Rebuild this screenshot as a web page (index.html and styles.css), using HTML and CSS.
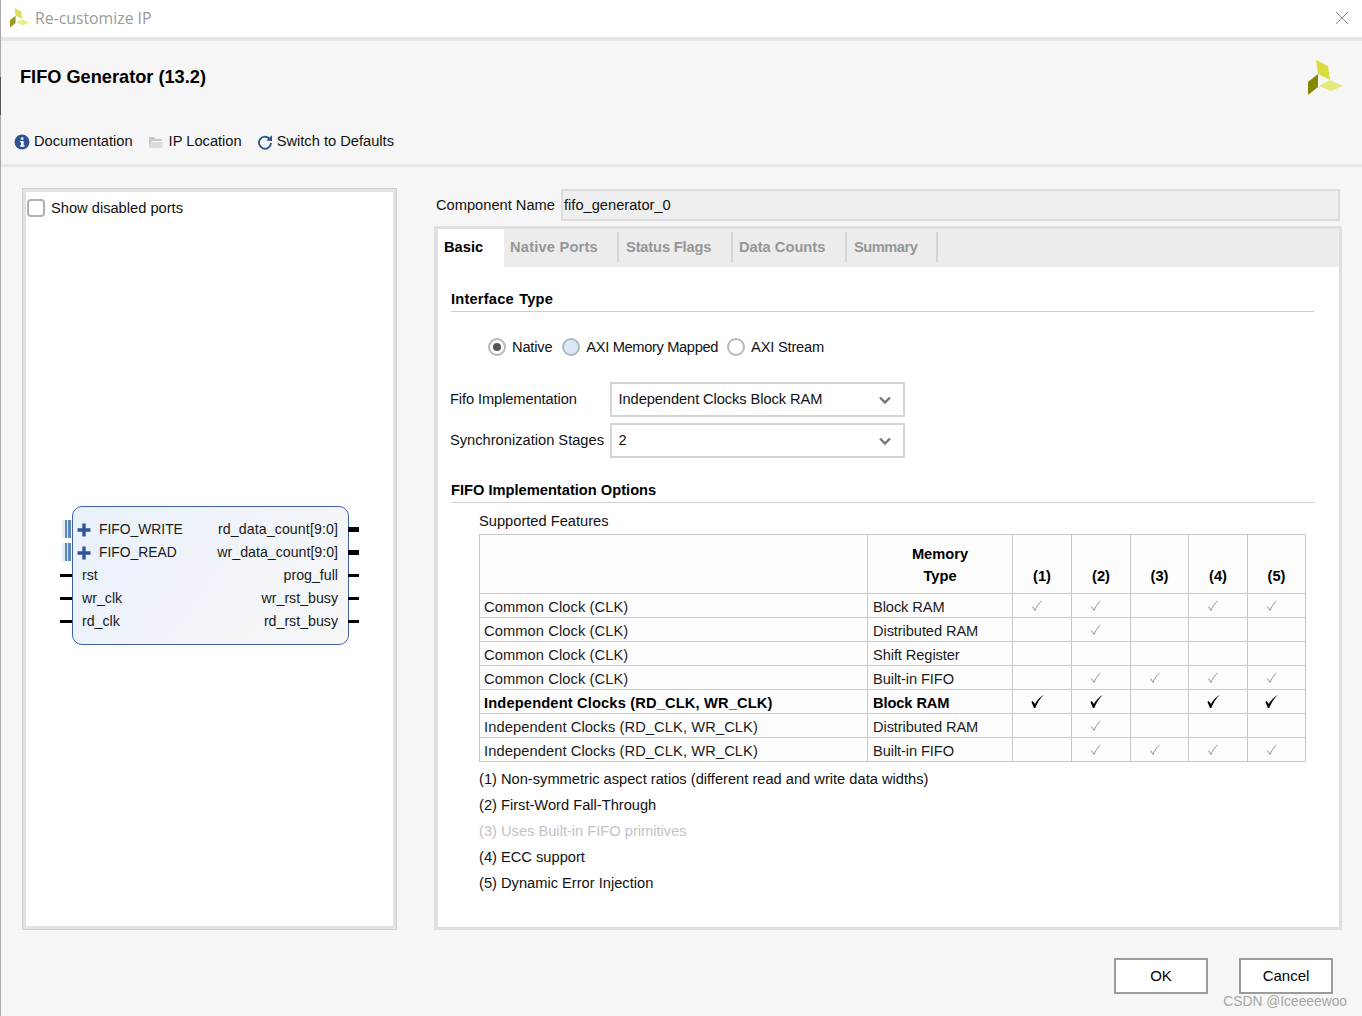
FILE: index.html
```html
<!DOCTYPE html>
<html lang="en">
<head>
<meta charset="utf-8">
<title>Re-customize IP</title>
<link rel="stylesheet" href="styles.css">
</head>
<body>
<svg class="defs" width="0" height="0" aria-hidden="true">
  <defs>
    <symbol id="logo" viewBox="0 0 36 36">
      <polygon points="8,0 20,6 22,20 10,14" fill="#d9dd3d"/>
      <polygon points="10,14 10,27 0,35 0,22" fill="#878700"/>
      <polygon points="11,26 22,20 35,26 23,31" fill="#e4e97c"/>
    </symbol>
    <symbol id="chk" viewBox="0 0 12 14">
      <path d="M1.5 7.5 L4 11.5 C5.2 8 7.5 4.5 10.5 2" fill="none" stroke="currentColor" stroke-width="1"/>
    </symbol>
    <symbol id="chk-b" viewBox="0 0 16 16">
      <path d="M1.5 8.5 L3 7.5 L5.2 10.6 C7.5 6.6 10.5 3.4 14.5 1 C10.8 4.8 8 9 5.6 15 L4.2 15 Z" fill="currentColor"/>
    </symbol>
    <symbol id="chev" viewBox="0 0 14 10">
      <path d="M2 2.5 L7 7.5 L12 2.5" fill="none" stroke="#777" stroke-width="2.4"/>
    </symbol>
  </defs>
</svg>
<div class="window">
  <header class="titlebar">
    <div class="title-left">
      <svg class="logo-small"><use href="#logo"/></svg>
      <span class="title-text">Re-customize IP</span>
    </div>
    <svg class="close" viewBox="0 0 14 14"><path d="M1 1 L13 13 M13 1 L1 13" stroke="#8c8c8c" stroke-width="1" fill="none"/></svg>
  </header>

  <section class="head">
    <div class="head-top">
      <h1 class="app-title">FIFO Generator (13.2)</h1>
      <svg class="logo-big"><use href="#logo"/></svg>
    </div>
    <nav class="toolbar">
      <a class="tool">
        <svg class="tool-icon" viewBox="0 0 16 16"><circle cx="8" cy="8" r="7.5" fill="#2d5390"/><rect x="7" y="7" width="2.6" height="5.4" fill="#fff"/><rect x="6" y="7" width="3" height="1.2" fill="#fff"/><rect x="6" y="11.4" width="4.6" height="1.2" fill="#fff"/><circle cx="8.2" cy="4.6" r="1.4" fill="#fff"/></svg>
        Documentation
      </a>
      <a class="tool tool-wide">
        <svg class="tool-icon" viewBox="0 0 16 16"><path d="M1 3 H6 L7.5 5 H14 V7 H4 L1 13 Z" fill="#c9c9c9"/><path d="M4 8 H15.5 L14 14 H1 Z" fill="#dcdcdc"/></svg>
        IP Location
      </a>
      <a class="tool">
        <svg class="tool-icon" viewBox="0 0 16 16"><path d="M12.9 5.2 A6 6 0 1 0 14 9" fill="none" stroke="#2d5390" stroke-width="1.9"/><polygon points="15,1.2 15,7 9.4,6.4" fill="#2d5390"/></svg>
        Switch to Defaults
      </a>
    </nav>
  </section>

  <main class="main">
    <aside class="left-panel">
      <label class="check-row"><span class="checkbox"></span>Show disabled ports</label>
      <div class="ip-block">
        <div class="port"><span class="pin-bus-l"><svg class="plus" viewBox="0 0 14 14"><path d="M7 0.5 V13.5 M0.5 7 H13.5" stroke="#2f5597" stroke-width="3.4"/></svg></span><span class="pname-bus">FIFO_WRITE</span><span class="rd-count">rd_data_count[9:0]</span><span class="pin-r thick"></span></div>
        <div class="port"><span class="pin-bus-l"><svg class="plus" viewBox="0 0 14 14"><path d="M7 0.5 V13.5 M0.5 7 H13.5" stroke="#2f5597" stroke-width="3.4"/></svg></span><span class="pname-bus">FIFO_READ</span><span>wr_data_count[9:0]</span><span class="pin-r thick"></span></div>
        <div class="port"><span class="pin-l"></span><span>rst</span><span>prog_full</span><span class="pin-r"></span></div>
        <div class="port"><span class="pin-l"></span><span>wr_clk</span><span>wr_rst_busy</span><span class="pin-r"></span></div>
        <div class="port"><span class="pin-l"></span><span>rd_clk</span><span>rd_rst_busy</span><span class="pin-r"></span></div>
      </div>
    </aside>

    <div class="right">
      <div class="comp-row">
        <label class="comp-label">Component Name</label>
        <div class="comp-input">fifo_generator_0</div>
      </div>

      <div class="tab-panel">
        <div class="tabs">
          <div class="tab active t1">Basic</div>
          <div class="tab t2">Native Ports</div>
          <div class="tab t3">Status Flags</div>
          <div class="tab t4">Data Counts</div>
          <div class="tab t5">Summary</div>
        </div>
        <div class="tab-body">
          <h2 class="section">Interface Type</h2>
          <div class="radios">
            <span class="radio checked"></span><span class="r-label r1">Native</span>
            <span class="radio hover"></span><span class="r-label r2">AXI Memory Mapped</span>
            <span class="radio"></span><span class="r-label r3">AXI Stream</span>
          </div>
          <div class="field first">
            <span class="f-label">Fifo Implementation</span>
            <div class="select">Independent Clocks Block RAM<svg class="chev"><use href="#chev"/></svg></div>
          </div>
          <div class="field">
            <span class="f-label">Synchronization Stages</span>
            <div class="select">2<svg class="chev"><use href="#chev"/></svg></div>
          </div>
          <h2 class="section second">FIFO Implementation Options</h2>
          <div class="supported">Supported Features</div>
          <table class="features">
            <colgroup>
              <col class="c-clock"><col class="c-mem"><col class="c-n"><col class="c-n"><col class="c-n3"><col class="c-n"><col class="c-n3">
            </colgroup>
            <thead>
              <tr>
                <th></th>
                <th class="th-mem"><span class="mem-line">Memory</span><span class="mem-line">Type</span></th>
                <th>(1)</th><th>(2)</th><th>(3)</th><th>(4)</th><th>(5)</th>
              </tr>
            </thead>
            <tbody>
              <tr><td>Common Clock (CLK)</td><td>Block RAM</td><td class="c"><svg class="ck"><use href="#chk"/></svg></td><td class="c"><svg class="ck"><use href="#chk"/></svg></td><td></td><td class="c"><svg class="ck"><use href="#chk"/></svg></td><td class="c"><svg class="ck"><use href="#chk"/></svg></td></tr>
              <tr><td>Common Clock (CLK)</td><td>Distributed RAM</td><td></td><td class="c"><svg class="ck"><use href="#chk"/></svg></td><td></td><td></td><td></td></tr>
              <tr><td>Common Clock (CLK)</td><td>Shift Register</td><td></td><td></td><td></td><td></td><td></td></tr>
              <tr><td>Common Clock (CLK)</td><td>Built-in FIFO</td><td></td><td class="c"><svg class="ck"><use href="#chk"/></svg></td><td class="c"><svg class="ck"><use href="#chk"/></svg></td><td class="c"><svg class="ck"><use href="#chk"/></svg></td><td class="c"><svg class="ck"><use href="#chk"/></svg></td></tr>
              <tr class="sel"><td>Independent Clocks (RD_CLK, WR_CLK)</td><td>Block RAM</td><td class="c"><svg class="ckb"><use href="#chk-b"/></svg></td><td class="c"><svg class="ckb"><use href="#chk-b"/></svg></td><td></td><td class="c"><svg class="ckb"><use href="#chk-b"/></svg></td><td class="c"><svg class="ckb"><use href="#chk-b"/></svg></td></tr>
              <tr><td>Independent Clocks (RD_CLK, WR_CLK)</td><td>Distributed RAM</td><td></td><td class="c"><svg class="ck"><use href="#chk"/></svg></td><td></td><td></td><td></td></tr>
              <tr><td>Independent Clocks (RD_CLK, WR_CLK)</td><td>Built-in FIFO</td><td></td><td class="c"><svg class="ck"><use href="#chk"/></svg></td><td class="c"><svg class="ck"><use href="#chk"/></svg></td><td class="c"><svg class="ck"><use href="#chk"/></svg></td><td class="c"><svg class="ck"><use href="#chk"/></svg></td></tr>
            </tbody>
          </table>
          <ul class="notes">
            <li>(1) Non-symmetric aspect ratios (different read and write data widths)</li>
            <li>(2) First-Word Fall-Through</li>
            <li class="muted">(3) Uses Built-in FIFO primitives</li>
            <li>(4) ECC support</li>
            <li>(5) Dynamic Error Injection</li>
          </ul>
        </div>
      </div>
    </div>
  </main>

  <footer class="footer">
    <button class="btn">OK</button>
    <button class="btn">Cancel</button>
  </footer>
  <div class="watermark">CSDN @Iceeeewoo</div>
</div>
</body>
</html>
```
FILE: styles.css
```css
* { box-sizing: border-box; }
html, body { margin: 0; padding: 0; }
body {
  width: 1362px;
  height: 1016px;
  overflow: hidden;
  background: #f6f6f6;
  color: #111;
  font-family: "Liberation Sans", Arial, sans-serif;
  font-size: 14.67px;
}
.defs { position: absolute; }
.window {
  position: relative;
  width: 1362px;
  height: 1016px;
  border-left: 1px solid #a8a8a8;
}
.window::before {
  content: "";
  position: absolute;
  left: -1px;
  top: 77px;
  width: 1px;
  height: 38px;
  background: #555;
}

/* title bar */
.titlebar {
  height: 41px;
  background: #fff;
  border-bottom: 4px solid #e6e6e6;
  display: flex;
  align-items: center;
  justify-content: space-between;
  padding: 0 13px 0 9px;
}
.title-left { display: flex; align-items: center; gap: 5px; }
.logo-small { width: 20px; height: 20px; margin-bottom: 2px; opacity: 0.85; }
.title-text {
  font-family: "Open Sans", sans-serif;
  font-size: 15.8px;
  color: #9a9a9a;
  margin-bottom: 1px;
}
.close { width: 14px; height: 14px; margin-bottom: 1px; }

/* header */
.head {
  height: 126px;
  border-bottom: 3px solid #e6e6e6;
  display: flex;
  flex-direction: column;
}
.head-top {
  height: 78px;
  display: flex;
  justify-content: space-between;
  padding: 24px 18px 0 19px;
}
.app-title {
  margin: 0;
  font-size: 18.2px;
  line-height: 24px;
  font-weight: bold;
  color: #000;
}
.logo-big { width: 36px; height: 36px; margin-top: -5px; }
.toolbar {
  display: flex;
  align-items: center;
  padding-left: 13px;
  gap: 15px;
  height: 44px;
}
.tool { display: flex; align-items: center; gap: 4px; color: #111; }
.tool-wide { gap: 5px; }
.tool-icon { width: 16px; height: 16px; margin-top: 1px; }

/* main area */
.main {
  display: flex;
  gap: 37px;
  padding: 21px 0 0 21px;
}
.left-panel {
  position: relative;
  width: 375px;
  height: 742px;
  background: #fff;
  border: 1px solid #cfcfcf;
  box-shadow: inset 0 0 0 3px #e2e2e2;
  padding: 10px 4px;
}
.check-row { display: flex; align-items: center; gap: 6px; line-height: 18px; }
.checkbox {
  width: 18px;
  height: 18px;
  border: 2px solid #b0b0b0;
  border-radius: 4px;
  background: #fff;
}

/* ip block diagram */
.ip-block {
  position: absolute;
  left: 49px;
  top: 317px;
  width: 277px;
  height: 139px;
  border: 1px solid #3f62a3;
  border-radius: 10px;
  background: linear-gradient(125deg, #eaf1fb 0%, #f1f4f9 55%, #f6f6f6 100%);
  padding: 11px 10px 0 9px;
}
.port {
  position: relative;
  height: 23px;
  line-height: 23px;
  display: flex;
  justify-content: space-between;
  font-size: 14.2px;
  color: #1a1a1a;
}
.pname-bus { margin-left: 17px; font-size: 13.85px; }
.rd-count { letter-spacing: 0.1px; }
.pin-l, .pin-r {
  position: absolute;
  top: 10px;
  height: 3px;
  background: #000;
}
.pin-l { left: -22px; width: 12px; }
.pin-r { right: -21px; width: 11px; }
.pin-r.thick { top: 9px; height: 5px; }
.pin-bus-l {
  position: absolute;
  left: -9px;
  top: 2px;
  width: 0;
  height: 18px;
}
.pin-bus-l::before {
  content: "";
  position: absolute;
  left: -11px;
  top: 0;
  width: 9px;
  height: 18px;
  background: linear-gradient(to right, #e4ecf5 0 3px, #5b86b8 3px 5px, #e4ecf5 5px 6px, #5b86b8 6px 9px);
}
.plus { position: absolute; left: 4px; top: 3px; width: 14px; height: 14px; }

/* right side */
.right { width: 908px; }
.comp-row { display: flex; align-items: center; height: 32px; margin: 1px 0 0 1px; }
.comp-label { width: 126px; padding-left: 1px; }
.comp-input {
  width: 779px;
  height: 32px;
  line-height: 28px;
  background: #eeeeee;
  border: 2px solid #dcdcdc;
  padding-left: 1px;
}
.tab-panel {
  width: 908px;
  height: 704px;
  margin-top: 5px;
  background: #fff;
  border: 3px solid #dfdfdf;
  border-left-width: 4px;
}
.tabs {
  display: flex;
  height: 38px;
  background: #ececec;
}
.tab {
  font-weight: bold;
  color: #969696;
  line-height: 36px;
  position: relative;
  white-space: nowrap;
}
.tab::after {
  content: "";
  position: absolute;
  right: -1px;
  top: 3px;
  height: 30px;
  width: 2px;
  background: #d4d4d4;
}
.tab.active { background: #fff; color: #000; padding-left: 6px; }
.tab.active::after { display: none; }
.t1 { width: 66px; }
.t2 { width: 114px; padding-left: 6px; letter-spacing: 0.2px; }
.t3 { width: 114px; padding-left: 8px; letter-spacing: -0.15px; }
.t4 { width: 114px; padding-left: 7px; }
.t5 { width: 91px; padding-left: 8px; letter-spacing: -0.5px; }

.tab-body { padding: 0 25px 0 12px; }
.section {
  margin: 0 0 0 1px;
  font-size: 14.67px;
  font-weight: bold;
  color: #000;
  height: 45px;
  padding: 23px 0 0;
  line-height: 18px;
  border-bottom: 1px solid #cfcfcf;
  letter-spacing: 0.2px;
  word-spacing: 1px;
}
.section.second {
  margin-top: 23px;
  height: 22px;
  padding-top: 0;
  letter-spacing: 0;
  word-spacing: 0;
}
.radios {
  display: flex;
  align-items: center;
  height: 18px;
  margin: 26px 0 0 38px;
}
.radio {
  width: 18px;
  height: 18px;
  border-radius: 50%;
  border: 2px solid #b8b8b8;
  background: #fff;
  position: relative;
  flex: none;
}
.radio.hover { background: #dce8f6; border-color: #aeb6bf; }
.radio.checked::after {
  content: "";
  position: absolute;
  left: 3px;
  top: 3px;
  width: 8px;
  height: 8px;
  border-radius: 50%;
  background: #555;
}
.r-label { margin-left: 6px; }
.r1 { margin-right: 10px; letter-spacing: -0.2px; }
.r2 { margin-right: 9px; letter-spacing: -0.35px; }
.r3 { letter-spacing: -0.2px; }

.field { display: flex; align-items: center; margin-top: 6px; }
.field.first { margin-top: 26px; }
.f-label { width: 160px; white-space: nowrap; margin-bottom: 2px; }
.first .f-label { letter-spacing: -0.1px; }
.select {
  width: 295px;
  height: 35px;
  line-height: 31px;
  border: 2px solid #d4d4d4;
  background: #fff;
  padding-left: 6.5px;
  position: relative;
  letter-spacing: -0.08px;
}
.chev { position: absolute; right: 11px; top: 11px; width: 14px; height: 10px; }

.supported { margin: 9px 0 0 29px; line-height: 18px; }
.features {
  margin: 4px 0 0 29px;
  border-collapse: collapse;
  table-layout: fixed;
  width: 826px;
  background: #fdfdfd;
}
.c-clock { width: 388px; }
.c-mem { width: 145px; }
.c-n { width: 59px; }
.c-n3 { width: 58px; }
.features th, .features td { border: 1px solid #c6c6c6; padding: 0; }
.features th {
  height: 59px;
  padding-bottom: 6px;
  font-weight: bold;
  color: #000;
  vertical-align: bottom;
  line-height: 22px;
}
.mem-line { display: block; }
.features td {
  height: 24px;
  line-height: 20px;
  padding-left: 4px;
  padding-top: 3px;
  white-space: nowrap;
  color: #1a1a1a;
}
.features td:first-child { letter-spacing: 0.1px; }
.features td:nth-child(2) { padding-left: 5px; letter-spacing: -0.1px; }
.features td.c {
  padding: 0;
  text-align: center;
  color: #8f8f8f;
}
.ck { width: 12px; height: 14px; display: block; margin: 1px auto 0; position: relative; left: -5px; }
.ckb { width: 15px; height: 15px; display: block; margin: 0 auto 1px; position: relative; left: -5px; color: #000; }
.sel td { font-weight: bold; color: #000; }
.sel td:first-child { letter-spacing: 0.15px; }
.notes { list-style: none; margin: 4px 0 0 29px; padding: 0; }
.notes li { height: 26px; line-height: 26px; }
.notes .muted { color: #c3c3c3; }

/* footer */
.footer {
  display: flex;
  justify-content: flex-end;
  gap: 31px;
  padding: 28px 29px 0 0;
}
.btn {
  width: 94px;
  height: 36px;
  background: #fff;
  border: 2px solid #9c9c9c;
  font: inherit;
  font-size: 15px;
  color: #000;
  padding: 0 0 2px;
}
.watermark {
  position: absolute;
  right: 15px;
  top: 994px;
  font-size: 13.8px;
  line-height: 16px;
  color: #a6a6a6;
}
```
